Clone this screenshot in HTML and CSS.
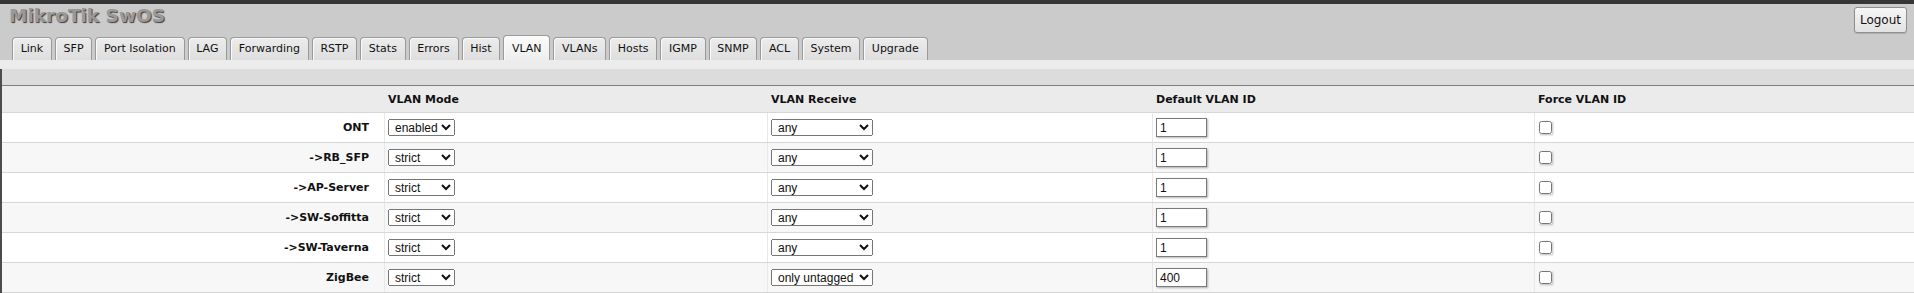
FILE: index.html
```html
<!DOCTYPE html>
<html lang="en">
<head>
    <meta charset="UTF-8">
    <title>MikroTik SwOS - VLAN</title>
    <link rel="stylesheet" href="styles.css">
</head>
<body>
    <div class="topbar"></div>
    <div class="header">
        <div class="header-top">
            <div class="brand">MikroTik SwOS</div>
            <button class="logout">Logout</button>
        </div>
        <ul class="tabs">
            <li class="tab">Link</li>
            <li class="tab">SFP</li>
            <li class="tab">Port Isolation</li>
            <li class="tab">LAG</li>
            <li class="tab">Forwarding</li>
            <li class="tab">RSTP</li>
            <li class="tab">Stats</li>
            <li class="tab">Errors</li>
            <li class="tab">Hist</li>
            <li class="tab active">VLAN</li>
            <li class="tab">VLANs</li>
            <li class="tab">Hosts</li>
            <li class="tab">IGMP</li>
            <li class="tab">SNMP</li>
            <li class="tab">ACL</li>
            <li class="tab">System</li>
            <li class="tab">Upgrade</li>
        </ul>
    </div>
    <div class="strip"></div>

    <div class="content">
        <div class="toolbar"></div>

        <div class="grid">
            <div class="row head">
                <div class="cell name"></div>
                <div class="cell">VLAN Mode</div>
                <div class="cell">VLAN Receive</div>
                <div class="cell">Default VLAN ID</div>
                <div class="cell">Force VLAN ID</div>
            </div>

            <div class="row">
                <div class="cell name">ONT</div>
                <div class="cell">
                    <select class="mode"><option>disabled</option><option>optional</option><option selected>enabled</option><option>strict</option></select>
                </div>
                <div class="cell">
                    <select class="receive"><option selected>any</option><option>only tagged</option><option>only untagged</option></select>
                </div>
                <div class="cell"><input class="vid" type="text" value="1"></div>
                <div class="cell force"><input type="checkbox"></div>
            </div>

            <div class="row">
                <div class="cell name">-&gt;RB_SFP</div>
                <div class="cell">
                    <select class="mode"><option>disabled</option><option>optional</option><option>enabled</option><option selected>strict</option></select>
                </div>
                <div class="cell">
                    <select class="receive"><option selected>any</option><option>only tagged</option><option>only untagged</option></select>
                </div>
                <div class="cell"><input class="vid" type="text" value="1"></div>
                <div class="cell force"><input type="checkbox"></div>
            </div>

            <div class="row">
                <div class="cell name">-&gt;AP-Server</div>
                <div class="cell">
                    <select class="mode"><option>disabled</option><option>optional</option><option>enabled</option><option selected>strict</option></select>
                </div>
                <div class="cell">
                    <select class="receive"><option selected>any</option><option>only tagged</option><option>only untagged</option></select>
                </div>
                <div class="cell"><input class="vid" type="text" value="1"></div>
                <div class="cell force"><input type="checkbox"></div>
            </div>

            <div class="row">
                <div class="cell name">-&gt;SW-Soffitta</div>
                <div class="cell">
                    <select class="mode"><option>disabled</option><option>optional</option><option>enabled</option><option selected>strict</option></select>
                </div>
                <div class="cell">
                    <select class="receive"><option selected>any</option><option>only tagged</option><option>only untagged</option></select>
                </div>
                <div class="cell"><input class="vid" type="text" value="1"></div>
                <div class="cell force"><input type="checkbox"></div>
            </div>

            <div class="row">
                <div class="cell name">-&gt;SW-Taverna</div>
                <div class="cell">
                    <select class="mode"><option>disabled</option><option>optional</option><option>enabled</option><option selected>strict</option></select>
                </div>
                <div class="cell">
                    <select class="receive"><option selected>any</option><option>only tagged</option><option>only untagged</option></select>
                </div>
                <div class="cell"><input class="vid" type="text" value="1"></div>
                <div class="cell force"><input type="checkbox"></div>
            </div>

            <div class="row">
                <div class="cell name">ZigBee</div>
                <div class="cell">
                    <select class="mode"><option>disabled</option><option>optional</option><option>enabled</option><option selected>strict</option></select>
                </div>
                <div class="cell">
                    <select class="receive"><option>any</option><option>only tagged</option><option selected>only untagged</option></select>
                </div>
                <div class="cell"><input class="vid" type="text" value="400"></div>
                <div class="cell force"><input type="checkbox"></div>
            </div>
        </div>
    </div>
</body>
</html>
```

FILE: styles.css
```css
body {
    margin: 0;
    font-family: "DejaVu Sans", Verdana, sans-serif;
    font-size: 11px;
    color: #111;
    background-color: #fff;
}
.topbar {
    height: 4px;
    background-color: #363636;
}
.header {
    height: 56px;
    background-color: #cbcbcb;
    display: flex;
    flex-direction: column;
}
.header-top {
    height: 31px;
    display: flex;
    justify-content: space-between;
    align-items: flex-start;
}
.brand {
    margin: 1px 0 0 9px;
    font-size: 18.5px;
    font-weight: bold;
    line-height: 22px;
    color: #999;
    text-shadow: 1px 1px 1px #3c3c3c;
}
.logout {
    margin: 3px 7px 0 0;
    height: 26px;
    padding: 0 5px;
    font-family: "DejaVu Sans", Verdana, sans-serif;
    font-size: 12px;
    line-height: 14px;
    color: #111;
    background: linear-gradient(#f6f6f6, #e2e2e2);
    border: 1px solid #8f8f8f;
    border-radius: 3px;
    box-shadow: 0 1px 1px rgba(0,0,0,0.15);
}
.tabs {
    list-style: none;
    margin: 0 0 0 12px;
    padding: 0;
    height: 25px;
    display: flex;
    align-items: flex-end;
    gap: 3px;
}
.tab {
    padding: 4px 7.7px;
    line-height: 14px;
    border: 1px solid #9a9a9a;
    border-bottom: none;
    border-radius: 4px 4px 0 0;
    background: linear-gradient(#ececec, #dedede);
    box-shadow: inset 1px 1px 0 #fafafa;
}
.tab.active {
    padding-top: 6px;
    background: linear-gradient(#fbfbfb, #eeeeee);
}
.strip {
    height: 9px;
    background-color: #ececec;
}
.content {
    border-left: 2px solid #4c4c4c;
}
.toolbar {
    height: 16px;
    background-color: #dcdcdc;
    border-bottom: 1px solid #7f7f7f;
}
.row {
    display: grid;
    grid-template-columns: 382px 383px 385px 382px 1fr;
    height: 29px;
    border-bottom: 1px solid #d6d6d6;
}
.row:nth-child(odd) {
    background-color: #f7f7f7;
}
.row.head {
    height: 26px;
    background-color: #ebebeb;
    font-weight: bold;
}
.cell {
    display: flex;
    align-items: center;
    padding-left: 3px;
    border-left: 1px solid #e8e8e8;
}
.head .cell {
    border-left-color: transparent;
}
.cell.name {
    justify-content: flex-end;
    padding: 0 15px 0 0;
    border-left: none;
    font-weight: bold;
}
.cell.force {
    padding-left: 4px;
}
select {
    height: 17px;
    padding: 0 0 0 2px;
    font-family: "Liberation Sans", Arial, sans-serif;
    font-size: 12px;
    color: #111;
}
select.mode {
    width: 67px;
}
select.receive {
    width: 102px;
}
.vid {
    box-sizing: border-box;
    width: 51px;
    height: 19px;
    margin: 0;
    padding: 1px 3px;
    font-family: "Liberation Sans", Arial, sans-serif;
    font-size: 12px;
    color: #111;
    border: 1px solid #7a7a7a;
    box-shadow: 1px 1px 2px rgba(0,0,0,0.3);
}
input[type="checkbox"] {
    margin: 0;
    width: 13px;
    height: 13px;
    border-radius: 3px;
    box-shadow: 1px 1px 2px rgba(0,0,0,0.25);
}
```
